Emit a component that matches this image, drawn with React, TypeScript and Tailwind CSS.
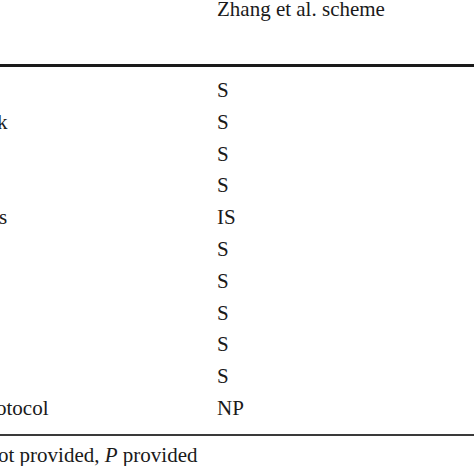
import React from "react";

const rows: { left: React.ReactNode; right: string }[] = [
  { left: "", right: "S" },
  { left: <span className="ml-[-3px]">k</span>, right: "S" },
  { left: "", right: "S" },
  { left: "", right: "S" },
  { left: <span className="ml-[-1px]">s</span>, right: "IS" },
  { left: "", right: "S" },
  { left: "", right: "S" },
  { left: "", right: "S" },
  { left: "", right: "S" },
  { left: "", right: "S" },
  { left: <span className="ml-[-4px]">otocol</span>, right: "NP" },
];

export default function App() {
  return (
    <div
      className="w-[474px] h-[474px] overflow-hidden bg-white text-[#1a1a1a] text-[21px]"
      style={{ fontFamily: '"Liberation Serif", "Times New Roman", serif' }}
    >
      <div className="h-[64px] grid grid-cols-[217px_1fr]">
        <div />
        <div className="leading-[20px] mt-[-1px] whitespace-nowrap">Zhang et al. scheme</div>
      </div>
      <div className="h-[3px] bg-[#1a1a1a]" />
      <div className="pt-[8px] pb-[9px]">
        {rows.map((r, i) => (
          <div key={i} className="grid grid-cols-[217px_1fr] h-[31.8px] leading-[31.8px]">
            <div className="overflow-hidden whitespace-nowrap">{r.left}</div>
            <div>{r.right}</div>
          </div>
        ))}
      </div>
      <div className="h-[2px] bg-[#3a3a3a]" />
      <div className="mt-[8px] leading-[22px] whitespace-nowrap overflow-hidden">
        <span className="ml-[-2px]">ot provided, </span>
        <i>P</i> provided
      </div>
    </div>
  );
}
